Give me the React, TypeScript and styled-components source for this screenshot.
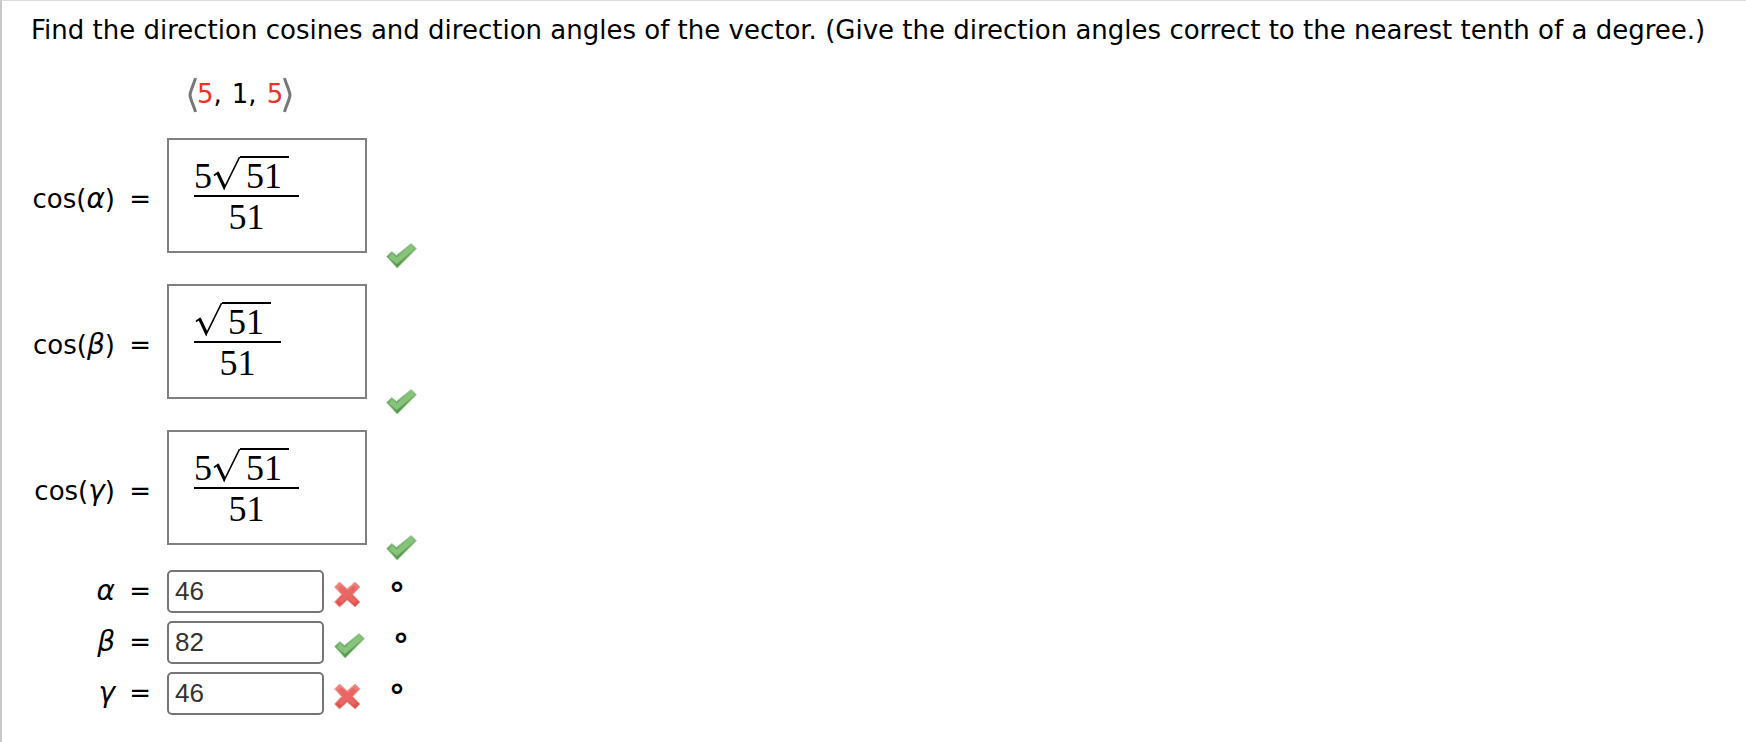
import React from "react";
import styled, { createGlobalStyle } from "styled-components";

const GlobalStyle = createGlobalStyle`
  * { box-sizing: border-box; }
  body { margin: 0; background: #fff; }
`;

const Page = styled.main`
  min-height: 100vh;
  padding: 13px 24px 24px 29px;
  border-top: 1px solid #ddd;
  border-left: 2px solid #c8c8c8;
  color: #000;
  font-family: Verdana, "DejaVu Sans", sans-serif;
  font-size: 26px;
  line-height: 32px;
`;

const Prompt = styled.p`
  margin: 0;
`;

const Vector = styled.div`
  display: flex;
  align-items: center;
  height: 36px;
  margin: 31px 0 25px 157px;
`;

const Given = styled.span`
  color: #f03223;
`;

const Components = styled.span`
  display: flex;
  gap: 10px;
  padding-bottom: 2px;
`;

const CosineRow = styled.div`
  display: flex;
  height: 131px;
  margin-bottom: 15px;
`;

const AngleRow = styled.div`
  display: flex;
  height: 43px;
  margin-bottom: 8px;
`;

const AngleList = styled.div`
  margin-top: -6px;
`;

const Label = styled.label<{ $tall?: boolean }>`
  display: flex;
  justify-content: flex-end;
  flex: none;
  width: 120px;
  margin-right: 16px;
  padding-top: ${(p) => (p.$tall ? 45 : 5)}px;
  white-space: pre;
`;

const Greek = styled.i`
  font-family: "DejaVu Sans", sans-serif;
  font-size: 28px;
`;

const Equals = styled.span`
  width: 36px;
  text-align: right;
`;

const MathField = styled.div`
  width: 200px;
  height: 115px;
  padding: 16px 25px;
  border: 2px solid #808080;
  font-family: "Liberation Serif", serif;
  font-size: 36px;
  line-height: 36px;
`;

const Fraction = styled.span`
  display: inline-flex;
  flex-direction: column;
`;

const Numerator = styled.span`
  display: flex;
  height: 41px;
  padding-right: 10px;
  border-bottom: 2px solid #000;
`;

const Coefficient = styled.span`
  padding-top: 2px;
`;

const Radicand = styled.span`
  height: 36px;
  padding: 0 7px 0 6px;
  border-top: 2px solid #000;
`;

const Denominator = styled.span`
  padding-top: 2px;
  text-align: center;
`;

const Mark = styled.span<{ $field?: boolean }>`
  display: flex;
  align-items: ${(p) => (p.$field ? "flex-end" : "center")};
  margin-left: ${(p) => (p.$field ? 19 : 10)}px;
  padding-top: ${(p) => (p.$field ? 0 : 6)}px;
`;

const AngleInput = styled.input`
  width: 157px;
  height: 43px;
  padding: 0 6px;
  border: 2px solid #767676;
  border-radius: 5px;
  background: #fff;
  color: #333;
  font-family: "Liberation Sans", Arial, sans-serif;
  font-size: 26px;
`;

const Degree = styled.span`
  margin-left: 28px;
  padding-top: 9px;
  font-size: 32px;
  font-weight: bold;
`;

const Bracket = ({ close }: { close?: boolean }) => (
  <svg width="9" height="36" viewBox="0 0 9 36" aria-hidden="true">
    <path
      d={close ? "M1.5 1C3 7 6.2 12 7 18 6.2 24 3 29 1.5 35" : "M7.5 1C6 7 2.8 12 2 18 2.8 24 6 29 7.5 35"}
      fill="none" stroke="#777" strokeWidth="3"
    />
  </svg>
);

const Radical = () => (
  <svg width="28" height="36" viewBox="0 0 28 36" aria-hidden="true">
    <path d="M2 19.5 6 16.5 12.3 32 27.6 1" fill="none" stroke="#000" strokeWidth="1.6" />
    <path d="M4.2 17.6 7 16.2 13.4 29.5 12.2 34.4Z" fill="#000" />
  </svg>
);

const Check = () => (
  <svg width="31" height="26" viewBox="0 0 31 26" role="img" aria-label="Correct">
    <defs>
      <linearGradient id="leaf" x1="0" y1="0" x2="0" y2="1">
        <stop offset="0" stopColor="#86c07b" />
        <stop offset="1" stopColor="#4f9446" />
      </linearGradient>
    </defs>
    <path d="M.6 13.5 5.8 8.6 10.4 12.4 25.2.6 30.4 5.8 11.2 25Z" fill="url(#leaf)" stroke="#9ccb94" strokeWidth="1" strokeLinejoin="round" />
    <path d="M4.5 12.5 10.8 17.8 26.5 4" fill="none" stroke="#88c37d" strokeWidth="5" />
  </svg>
);

const Cross = () => (
  <svg width="27" height="27" viewBox="0 0 27 27" role="img" aria-label="Incorrect">
    <defs>
      <linearGradient id="rose" x1="0" y1="0" x2="0" y2="1">
        <stop offset="0" stopColor="#f08783" />
        <stop offset="1" stopColor="#df4a46" />
      </linearGradient>
    </defs>
    <path
      d="M5.5 1 13.2 8 21 1 26 6 18.8 13.5 26 21 21 26 13.2 19 5.5 26 .6 21 7.7 13.5 .6 6Z"
      fill="url(#rose)" stroke="#f2a09d" strokeWidth="1" strokeLinejoin="round"
    />
    <path d="M6 6 21 21M21 6 6 21" stroke="#ea6663" strokeWidth="4" />
  </svg>
);

const cosines = [
  { id: "cos-alpha", angle: "α", coefficient: "5" },
  { id: "cos-beta", angle: "β", coefficient: "" },
  { id: "cos-gamma", angle: "γ", coefficient: "5" },
];

const angles = [
  { id: "alpha", angle: "α", value: "46", correct: false },
  { id: "beta", angle: "β", value: "82", correct: true },
  { id: "gamma", angle: "γ", value: "46", correct: false },
];

export default function App() {
  return (
    <>
      <GlobalStyle />
      <Page>
        <Prompt>
          Find the direction cosines and direction angles of the vector. (Give the direction angles
          correct to the nearest tenth of a degree.)
        </Prompt>
        <Vector>
          <Bracket />
          <Components>
            <span><Given>5</Given>,</span>
            <span>1,</span>
            <Given>5</Given>
          </Components>
          <Bracket close />
        </Vector>
        {cosines.map((c) => (
          <CosineRow key={c.id}>
            <Label as="span" $tall id={c.id}>
              <span>cos(<Greek>{c.angle}</Greek>)</span>
              <Equals>=</Equals>
            </Label>
            <MathField role="textbox" tabIndex={0} aria-labelledby={c.id}>
              <Fraction>
                <Numerator>
                  {c.coefficient && <Coefficient>{c.coefficient}</Coefficient>}
                  <Radical />
                  <Radicand>51</Radicand>
                </Numerator>
                <Denominator>51</Denominator>
              </Fraction>
            </MathField>
            <Mark $field><Check /></Mark>
          </CosineRow>
        ))}
        <AngleList>
          {angles.map((a) => (
            <AngleRow key={a.id}>
              <Label htmlFor={a.id}>
                <Greek>{a.angle}</Greek>
                <Equals>=</Equals>
              </Label>
              <AngleInput id={a.id} type="text" defaultValue={a.value} />
              <Mark>{a.correct ? <Check /> : <Cross />}</Mark>
              <Degree>°</Degree>
            </AngleRow>
          ))}
        </AngleList>
      </Page>
    </>
  );
}
